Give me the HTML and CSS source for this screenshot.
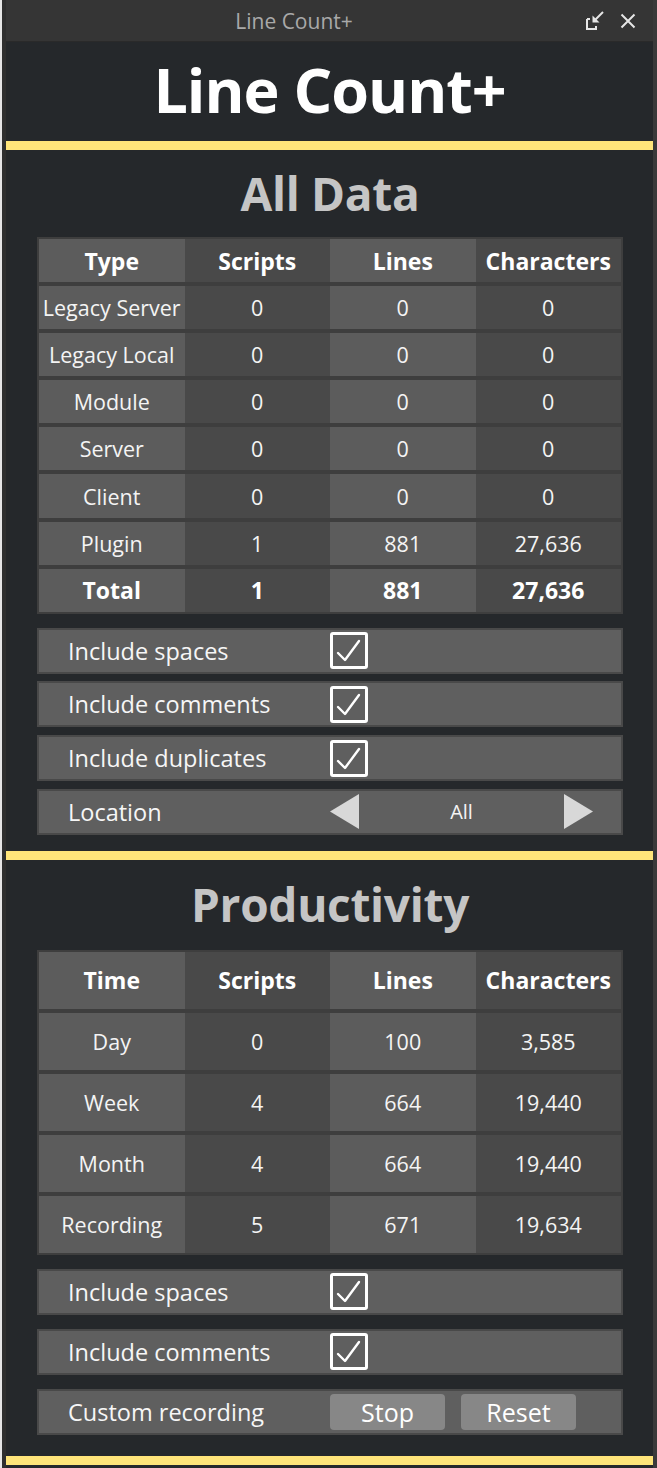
FILE: index.html
```html
<!DOCTYPE html>
<html>
<head>
<meta charset="utf-8">
<title>Line Count+</title>
<link rel="stylesheet" href="styles.css">
</head>
<body>
<div class="window">
  <div class="titlebar">
    <div class="titlebar-text">Line Count+</div>
    <div class="titlebar-icons">
      <svg class="ico-dock" width="22" height="22" viewBox="0 0 22 22">
        <path d="M3 10 V20 H12 V17" fill="none" stroke="#e6e6e6" stroke-width="2"/>
        <path d="M3 10 H6" fill="none" stroke="#e6e6e6" stroke-width="2"/>
        <path d="M19 3 L10 12" fill="none" stroke="#e6e6e6" stroke-width="2"/>
        <path d="M8.5 6.5 V13.5 H15.5 Z" fill="#e6e6e6"/>
      </svg>
      <svg class="ico-close" width="16" height="16" viewBox="0 0 16 16">
        <path d="M1.5 1.5 L14.5 14.5 M14.5 1.5 L1.5 14.5" stroke="#e6e6e6" stroke-width="2" fill="none"/>
      </svg>
    </div>
  </div>

  <div class="app-head">Line Count+</div>
  <div class="yellow"></div>

  <div class="section">
    <h2 class="section-title">All Data</h2>
    <div class="table t-all">
      <div class="c l hd">Type</div><div class="c d hd">Scripts</div><div class="c l hd">Lines</div><div class="c d hd">Characters</div>
      <div class="c l">Legacy Server</div><div class="c d">0</div><div class="c l">0</div><div class="c d">0</div>
      <div class="c l">Legacy Local</div><div class="c d">0</div><div class="c l">0</div><div class="c d">0</div>
      <div class="c l">Module</div><div class="c d">0</div><div class="c l">0</div><div class="c d">0</div>
      <div class="c l">Server</div><div class="c d">0</div><div class="c l">0</div><div class="c d">0</div>
      <div class="c l">Client</div><div class="c d">0</div><div class="c l">0</div><div class="c d">0</div>
      <div class="c l">Plugin</div><div class="c d">1</div><div class="c l">881</div><div class="c d">27,636</div>
      <div class="c l hd">Total</div><div class="c d hd">1</div><div class="c l hd">881</div><div class="c d hd">27,636</div>
    </div>

    <div class="options opts-all">
      <div class="opt">
        <span class="opt-label">Include spaces</span>
        <span class="check"><svg viewBox="0 0 32 31" width="32" height="31"><path d="M5 18 L12 25 L26 6" fill="none" stroke="#fff" stroke-width="2.4" stroke-linecap="round" stroke-linejoin="round"/></svg></span>
      </div>
      <div class="opt">
        <span class="opt-label">Include comments</span>
        <span class="check"><svg viewBox="0 0 32 31" width="32" height="31"><path d="M5 18 L12 25 L26 6" fill="none" stroke="#fff" stroke-width="2.4" stroke-linecap="round" stroke-linejoin="round"/></svg></span>
      </div>
      <div class="opt">
        <span class="opt-label">Include duplicates</span>
        <span class="check"><svg viewBox="0 0 32 31" width="32" height="31"><path d="M5 18 L12 25 L26 6" fill="none" stroke="#fff" stroke-width="2.4" stroke-linecap="round" stroke-linejoin="round"/></svg></span>
      </div>
      <div class="opt">
        <span class="opt-label">Location</span>
        <div class="selector">
          <svg width="30" height="35" viewBox="0 0 30 35"><path d="M0 17.5 L29 0 V35 Z" fill="#d8d8d8"/></svg>
          <span class="sel-value">All</span>
          <svg width="30" height="35" viewBox="0 0 30 35"><path d="M30 17.5 L1 0 V35 Z" fill="#d8d8d8"/></svg>
        </div>
      </div>
    </div>
  </div>
  <div class="yellow"></div>

  <div class="section">
    <h2 class="section-title st-prod">Productivity</h2>
    <div class="table t-prod">
      <div class="c l hd">Time</div><div class="c d hd">Scripts</div><div class="c l hd">Lines</div><div class="c d hd">Characters</div>
      <div class="c l">Day</div><div class="c d">0</div><div class="c l">100</div><div class="c d">3,585</div>
      <div class="c l">Week</div><div class="c d">4</div><div class="c l">664</div><div class="c d">19,440</div>
      <div class="c l">Month</div><div class="c d">4</div><div class="c l">664</div><div class="c d">19,440</div>
      <div class="c l">Recording</div><div class="c d">5</div><div class="c l">671</div><div class="c d">19,634</div>
    </div>

    <div class="options opts-prod">
      <div class="opt">
        <span class="opt-label">Include spaces</span>
        <span class="check"><svg viewBox="0 0 32 31" width="32" height="31"><path d="M5 18 L12 25 L26 6" fill="none" stroke="#fff" stroke-width="2.4" stroke-linecap="round" stroke-linejoin="round"/></svg></span>
      </div>
      <div class="opt">
        <span class="opt-label">Include comments</span>
        <span class="check"><svg viewBox="0 0 32 31" width="32" height="31"><path d="M5 18 L12 25 L26 6" fill="none" stroke="#fff" stroke-width="2.4" stroke-linecap="round" stroke-linejoin="round"/></svg></span>
      </div>
      <div class="opt">
        <span class="opt-label">Custom recording</span>
        <div class="buttons">
          <span class="btn">Stop</span>
          <span class="btn">Reset</span>
        </div>
      </div>
    </div>
  </div>
  <div class="yellow"></div>
</div>
</body>
</html>
```

FILE: styles.css
```css
html, body {
  margin: 0;
  padding: 0;
  background: #e6e6e6;
}
body {
  font-family: "Open Sans", "Noto Sans", sans-serif;
  color: #fff;
}
.window {
  margin-left: 2px;
  width: 655px;
  height: 1468px;
  box-sizing: border-box;
  border-left: 4px solid #2f2f2f;
  border-right: 4px solid #3a3a3a;
  background: #25282b;
  overflow: hidden;
}
.titlebar {
  height: 41px;
  background: #353535;
  border-bottom: 1px solid #2a2a2a;
  display: flex;
  align-items: center;
}
.titlebar-text {
  flex: 1;
  text-align: center;
  font-size: 21px;
  color: #a9a9a9;
  letter-spacing: 0;
  padding-left: 2px;
}
.titlebar-icons {
  width: 73px;
  display: flex;
  align-items: center;
  gap: 14px;
  padding-left: 4px;
  box-sizing: border-box;
}
.ico-dock { display: block; margin-top: -2px; }
.ico-close { display: block; }
.app-head {
  height: 99px;
  display: flex;
  align-items: center;
  justify-content: center;
  font-size: 61px;
  font-weight: 700;
  letter-spacing: -1px;
  padding-bottom: 4px;
  box-sizing: border-box;
}
.yellow {
  height: 9px;
  background: #ffe57a;
}
.section {
  padding: 0 30px 0 31px;
}
.section-title {
  margin: 0;
  height: 87px;
  display: flex;
  align-items: center;
  justify-content: center;
  font-size: 46px;
  font-weight: 700;
  color: #c5c5c5;
  letter-spacing: -0.3px;
  padding-bottom: 2px;
  box-sizing: border-box;
}
.section-title.st-prod { height: 90px; }
.table {
  display: grid;
  grid-template-columns: repeat(4, 1fr);
  row-gap: 4px;
  padding: 2px;
  background: #3e3e3e;
}
.t-all { grid-auto-rows: 43.1px; }
.t-prod { grid-auto-rows: 57px; }
.c {
  display: flex;
  align-items: center;
  justify-content: center;
  font-size: 21.5px;
  color: #f4f4f4;
  white-space: nowrap;
  letter-spacing: 0;
}
.c.l { background: #5c5c5c; }
.c.d { background: #494949; }
.c.hd {
  font-weight: 700;
  font-size: 23px;
  color: #fff;
}
.options {
  display: flex;
  flex-direction: column;
}
.opts-all { padding: 14px 0 16px; gap: 7.7px; }
.opts-prod { padding: 14px 0 21px; gap: 14px; }
.opt {
  height: 46px;
  box-sizing: border-box;
  background: #5f5f5f;
  border: 2px solid #494949;
  display: flex;
  align-items: center;
}
.opt-label {
  width: 291px;
  padding-left: 29px;
  box-sizing: border-box;
  font-size: 23.5px;
  color: #f6f6f6;
  letter-spacing: 0;
}
.check {
  width: 38px;
  height: 37px;
  box-sizing: border-box;
  border: 3px solid #fff;
  border-radius: 3px;
  display: flex;
  align-items: center;
  justify-content: center;
}
.check svg { display: block; }
.selector {
  width: 263px;
  display: flex;
  align-items: center;
  justify-content: space-between;
}
.selector svg { display: block; }
.sel-value {
  font-size: 20px;
  color: #f4f4f4;
}
.buttons {
  display: flex;
  gap: 16px;
}
.btn {
  width: 115px;
  height: 36px;
  border-radius: 4px;
  background: #878787;
  display: flex;
  align-items: center;
  justify-content: center;
  font-size: 25px;
  color: #fff;
}
```
